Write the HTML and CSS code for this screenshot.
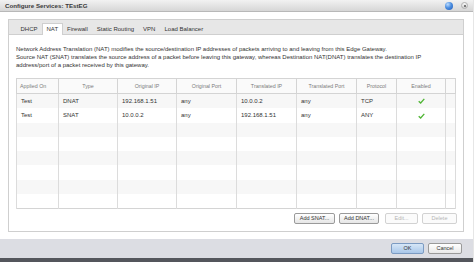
FILE: index.html
```html
<!DOCTYPE html>
<html>
<head>
<meta charset="utf-8">
<link rel="stylesheet" href="styles.css">
</head>
<body>
<div class="window">
  <div class="titlebar">
    <span class="title">Configure Services: TEstEG</span>
    <span class="tb-icons">
      <span class="help-dot"></span>
      <span class="close-dot"><span></span></span>
    </span>
  </div>
  <div class="main">
    <div class="panel">
      <div class="tabs">
        <span class="tab">DHCP</span>
        <span class="tab active">NAT</span>
        <span class="tab">Firewall</span>
        <span class="tab">Static Routing</span>
        <span class="tab">VPN</span>
        <span class="tab">Load Balancer</span>
      </div>
      <div class="content">
        <p class="desc">Network Address Translation (NAT) modifies the source/destination IP addresses of packets arriving to and leaving from this Edge Gateway.<br>Source NAT (SNAT) translates the source address of a packet before leaving this gateway, whereas Destination NAT(DNAT) translates the destination IP<br>address/port of a packet received by this gateway.</p>
        <table class="grid">
          <colgroup>
            <col class="c1"><col class="c2"><col class="c3"><col class="c4"><col class="c5"><col class="c6"><col class="c7"><col class="c8"><col class="c9">
          </colgroup>
          <thead>
            <tr><th class="left">Applied On</th><th>Type</th><th>Original IP</th><th>Original Port</th><th>Translated IP</th><th>Translated Port</th><th>Protocol</th><th>Enabled</th><th></th></tr>
          </thead>
          <tbody>
            <tr class="odd"><td>Test</td><td>DNAT</td><td>192.168.1.51</td><td>any</td><td>10.0.0.2</td><td>any</td><td>TCP</td><td class="ctr"><svg class="chk" viewBox="0 0 10 8" width="7" height="6"><path d="M1 4.2 L3.8 6.8 L9 1" fill="none" stroke="#4fb534" stroke-width="1.9"/></svg></td><td></td></tr>
            <tr><td>Test</td><td>SNAT</td><td>10.0.0.2</td><td>any</td><td>192.168.1.51</td><td>any</td><td>ANY</td><td class="ctr"><svg class="chk" viewBox="0 0 10 8" width="7" height="6"><path d="M1 4.2 L3.8 6.8 L9 1" fill="none" stroke="#4fb534" stroke-width="1.9"/></svg></td><td></td></tr>
            <tr class="odd"><td></td><td></td><td></td><td></td><td></td><td></td><td></td><td></td><td></td></tr>
            <tr><td></td><td></td><td></td><td></td><td></td><td></td><td></td><td></td><td></td></tr>
            <tr class="odd"><td></td><td></td><td></td><td></td><td></td><td></td><td></td><td></td><td></td></tr>
            <tr><td></td><td></td><td></td><td></td><td></td><td></td><td></td><td></td><td></td></tr>
            <tr class="odd"><td></td><td></td><td></td><td></td><td></td><td></td><td></td><td></td><td></td></tr>
            <tr><td></td><td></td><td></td><td></td><td></td><td></td><td></td><td></td><td></td></tr>
          </tbody>
        </table>
        <div class="actions">
          <button class="btn">Add SNAT...</button>
          <button class="btn">Add DNAT...</button>
          <button class="btn disabled">Edit...</button>
          <button class="btn disabled">Delete</button>
        </div>
      </div>
    </div>
  </div>
  <div class="footer">
    <button class="fbtn ok">OK</button>
    <button class="fbtn">Cancel</button>
  </div>
  <div class="bottom-edge"></div>
</div>
</body>
</html>
```

FILE: styles.css
```css
html, body {
  margin: 0;
  padding: 0;
  background: #ffffff;
}
body {
  font-family: "Liberation Sans", Arial, sans-serif;
  font-size: 6px;
  color: #333;
}
.window {
  width: 474px;
  height: 262px;
  display: flex;
  flex-direction: column;
  overflow: hidden;
  border-right: 1px solid #e6e6e6;
  box-sizing: border-box;
}
.titlebar {
  height: 11px;
  border-bottom: 1px solid #b8b8b8;
  background: linear-gradient(#f2f2f2, #d6d6d6);
  display: flex;
  align-items: center;
  justify-content: space-between;
  padding: 0 5px 0 5px;
  flex: none;
}
.title {
  font-weight: bold;
  font-size: 6.2px;
  color: #3a3a3a;
}
.tb-icons {
  display: flex;
  align-items: center;
  gap: 8px;
}
.help-dot {
  width: 8px;
  height: 8px;
  border-radius: 50%;
  background: radial-gradient(circle at 35% 30%, #bcdcff 0, #4d8fe0 45%, #1d58b8 100%);
}
.close-dot {
  width: 7px;
  height: 7px;
  border-radius: 50%;
  background: linear-gradient(#fafafa, #d0d0d0);
  border: 1px solid #b0b0b0;
  box-sizing: border-box;
  display: flex;
  align-items: center;
  justify-content: center;
}
.close-dot span {
  width: 2px;
  height: 2px;
  background: #555;
  border-radius: 50%;
}
.main {
  padding: 7px 9px 0 8px;
  flex: none;
}
.panel {
  border: 1px solid #cfcfcf;
  height: 213px;
  box-sizing: border-box;
  display: flex;
  flex-direction: column;
}
.tabs {
  height: 15px;
  background: #e7e7e7;
  border-bottom: 1px solid #cfcfcf;
  box-sizing: border-box;
  display: flex;
  align-items: flex-end;
  padding-left: 7px;
  flex: none;
}
.tab {
  padding: 0 3.5px;
  height: 11px;
  line-height: 10px;
  color: #333;
  font-size: 6px;
  box-sizing: border-box;
  border: 1px solid transparent;
  border-bottom: none;
}
.tab.active {
  background: #ffffff;
  border-color: #cfcfcf;
  margin-bottom: -1px;
  height: 12px;
}
.content {
  padding: 10px 8px 0 7px;
  flex: 1;
  display: flex;
  flex-direction: column;
}
.desc {
  margin: 0;
  line-height: 8px;
  font-size: 6px;
  color: #333;
  white-space: nowrap;
}
.grid {
  margin-top: 9px;
  border-collapse: collapse;
  table-layout: fixed;
  width: 439px;
  border: 1px solid #d4d4d4;
}
.c1 { width: 42px; }
.c2 { width: 59px; }
.c3 { width: 59px; }
.c4 { width: 60px; }
.c5 { width: 60px; }
.c6 { width: 60px; }
.c7 { width: 40px; }
.c8 { width: 49px; }
.c9 { width: 10px; }
.grid th {
  height: 14px;
  padding: 0;
  font-weight: normal;
  font-size: 5.3px;
  color: #7a7a7a;
  background: #fafafa;
  border: 1px solid #d4d4d4;
  text-align: center;
}
.grid th.left {
  text-align: left;
  padding-left: 3px;
}
.grid td {
  height: 14.25px;
  padding: 0 0 0 4px;
  border-left: 1px solid #dcdcdc;
  border-right: 1px solid #dcdcdc;
  font-size: 6px;
  color: #333;
  white-space: nowrap;
}
.grid tr.odd td {
  background: #f7f7f7;
}
.grid td.ctr {
  text-align: center;
  padding: 0;
}
.chk {
  display: inline-block;
  vertical-align: middle;
}
.actions {
  display: flex;
  justify-content: flex-end;
  gap: 4px;
  margin-top: 4px;
  margin-right: -2px;
}
.btn {
  height: 11px;
  padding: 0 4px;
  font-family: "Liberation Sans", Arial, sans-serif;
  font-size: 5.5px;
  color: #333;
  background: linear-gradient(#ffffff, #e6e6e6);
  border: 1px solid #9a9a9a;
  border-radius: 2px;
  line-height: 9px;
}
.btn:nth-child(1) { width: 41px; }
.btn:nth-child(2) { width: 40px; }
.btn:nth-child(3) { width: 33px; margin-left: 2px; }
.btn:nth-child(4) { width: 35px; }
.btn.disabled {
  color: #b5b5b5;
  border-color: #d2d2d2;
  background: #fbfbfb;
}
.footer {
  margin-top: 7px;
  height: 19px;
  background: #dcdde3;
  display: flex;
  justify-content: flex-end;
  align-items: center;
  gap: 4px;
  padding-right: 11px;
  flex: none;
}
.fbtn {
  height: 11px;
  width: 34px;
  font-family: "Liberation Sans", Arial, sans-serif;
  font-size: 5.5px;
  color: #333;
  background: linear-gradient(#ffffff, #e8e8e8);
  border: 1px solid #9a9a9a;
  border-radius: 2px;
  padding: 0;
  line-height: 9px;
}
.fbtn.ok {
  width: 33px;
  background: linear-gradient(#d6e6f7, #a9c7e9);
  border-color: #7c9bc2;
}
.bottom-edge {
  flex: 1;
  background: #54565c;
}
```
